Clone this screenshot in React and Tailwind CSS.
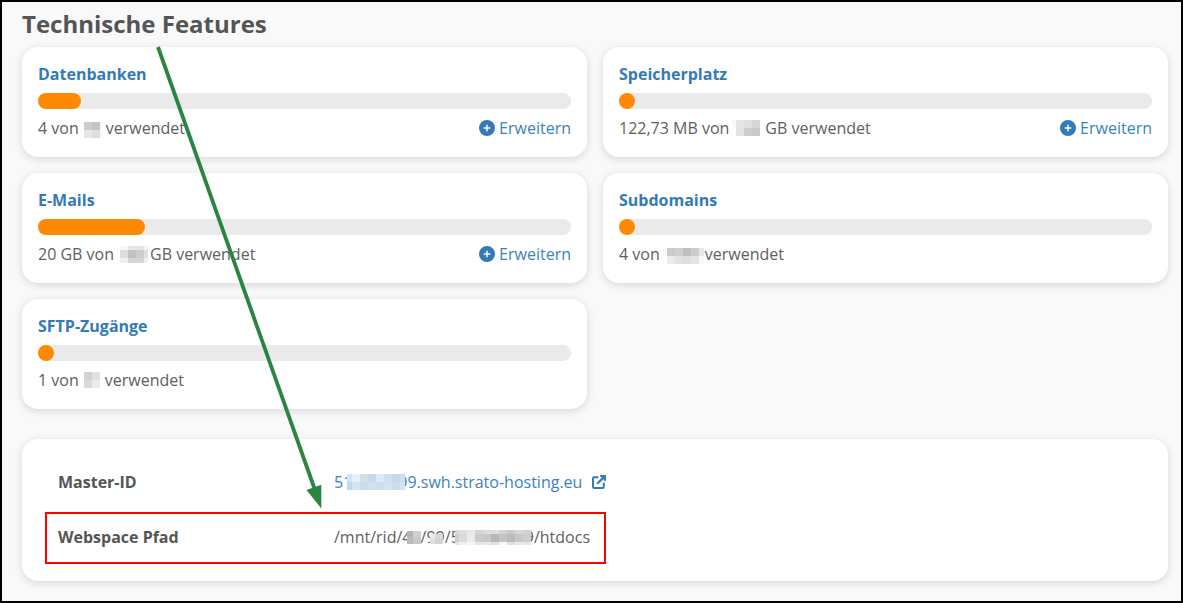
// Desc: Technical features overview of the hosting package
import { FaCirclePlus } from "react-icons/fa6";

// Pixelated cover over private values. cols/rows hold the cell sizes,
// cells the colors row by row (null = empty cell)
const Mosaic = ({ cols, rows, cells, className }) => {
  const width = cols.reduce((sum, w) => sum + w, 0);
  const height = rows.reduce((sum, h) => sum + h, 0);
  const rects = [];
  let y = 0;
  rows.forEach((h, r) => {
    let x = 0;
    cols.forEach((w, c) => {
      const fill = cells[r][c];
      if (fill) {
        rects.push(
          <rect key={`${r}-${c}`} x={x} y={y} width={w} height={h} fill={fill} />
        );
      }
      x += w;
    });
    y += h;
  });

  return (
    <svg
      width={width}
      height={height}
      viewBox={`0 0 ${width} ${height}`}
      shapeRendering="crispEdges"
      aria-hidden="true"
      className={`relative inline-block shrink-0 ${className || ""}`}
    >
      {rects}
    </svg>
  );
};

const ExternalLinkIcon = ({ className }) => (
  <svg
    viewBox="0 0 14 14"
    fill="none"
    stroke="currentColor"
    strokeWidth="2"
    aria-hidden="true"
    className={className}
  >
    <path
      d="M5.5 2.2H2.2Q1 2.2 1 3.4V11.8Q1 13 2.2 13H10.6Q11.8 13 11.8 11.8V8.5"
      strokeLinecap="round"
    />
    <path d="M8.2 1.1H12.9V5.8M12.6 1.4L5.3 8.7" strokeWidth="2.2" />
  </svg>
);

const features = [
  {
    title: "Datenbanken",
    percent: 8,
    before: "4 von",
    after: "verwendet",
    expandable: true,
    mosaic: {
      cols: [8, 8, 3],
      rows: [8, 8],
      cells: [
        ["#cdcdcd", "#c4c4c4", "#f8f8f8"],
        ["#e6e6e6", "#dedede", "#fafafa"],
      ],
      className: "mt-1 ml-[5px] mr-[3px]",
    },
  },
  {
    title: "Speicherplatz",
    percent: 1,
    before: "122,73 MB von",
    after: "GB verwendet",
    expandable: true,
    mosaic: {
      cols: [4, 8, 8, 8],
      rows: [8, 8],
      cells: [
        ["#f8f8f8", "#e6e6e6", "#e0e0e0", "#d6d6d6"],
        [null, "#e4e4e4", "#cccccc", "#cacaca"],
      ],
      className: "ml-[3px] mr-[5px]",
    },
  },
  {
    title: "E-Mails",
    percent: 20,
    before: "20 GB von",
    after: "GB verwendet",
    expandable: true,
    mosaic: {
      cols: [8, 8, 8, 4],
      rows: [4, 8, 5],
      cells: [
        ["#f7f7f7", "#e6e6e6", "#e6e6e6", "#f2f2f2"],
        ["#dedede", "#c1c1c1", "#cdcdcd", "#e0e0e0"],
        ["#f0f0f0", "#d5d5d5", "#d5d5d5", "#f0f0f0"],
      ],
      className: "ml-[6px] mr-[2px]",
    },
  },
  {
    title: "Subdomains",
    percent: 1,
    before: "4 von",
    after: "verwendet",
    expandable: false,
    mosaic: {
      cols: [4, 8, 8, 8, 8, 5],
      rows: [8, 8],
      cells: [
        ["#f8f8f8", "#cacaca", "#d0d0d0", "#c0c0c0", "#cccccc", "#e8e8e8"],
        [null, "#ececec", "#e2e2e2", "#dedede", "#e4e4e4", "#f8f8f8"],
      ],
      className: "mt-1 ml-[3px] mr-px",
    },
  },
  {
    title: "SFTP-Zugänge",
    percent: 1,
    before: "1 von",
    after: "verwendet",
    expandable: false,
    mosaic: {
      cols: [8, 8],
      rows: [8, 8],
      cells: [
        ["#d2d2d2", "#e0e0e0"],
        ["#dadada", "#ebebeb"],
      ],
      className: "ml-[5px] mr-[5px]",
    },
  },
];

const FeatureCard = ({ feature }) => (
  <section className="rounded-2xl bg-white px-4 pt-4 pb-[18px] shadow-[0_2px_8px_rgba(0,0,0,0.14)]">
    <h2 className="font-bold">
      <a href="#" className="text-[#337ab7]">
        {feature.title}
      </a>
    </h2>
    <div className="my-2 h-4 rounded-full bg-[#eaeaea]">
      <div
        className="h-4 min-w-4 rounded-full bg-[#ff8900]"
        style={{ width: `${feature.percent}%` }}
      />
    </div>
    <div className="flex items-center justify-between">
      <p className="flex items-center text-[#606060]">
        <span>{feature.before}</span>
        <Mosaic {...feature.mosaic} />
        <span>{feature.after}</span>
      </p>
      {feature.expandable && (
        <a href="#" className="flex items-center gap-1 text-[#3d82bd]">
          <FaCirclePlus className="size-4 text-[#337ab7]" />
          Erweitern
        </a>
      )}
    </div>
  </section>
);

const App = () => {
  return (
    <div className="relative min-h-screen border-2 border-black bg-[#f9f9f9] pt-[6px] pr-[13px] pb-5 pl-5 font-['Open_Sans','Noto_Sans',sans-serif] text-base leading-[22px] text-[#555]">
      <h1 className="mb-[7px] text-2xl leading-8 font-bold">
        Technische Features
      </h1>

      <div className="grid grid-cols-2 gap-4">
        {features.map((feature) => (
          <FeatureCard key={feature.title} feature={feature} />
        ))}
      </div>

      {/* Zugangsdaten */}
      <dl className="mt-[30px] flex flex-col items-start gap-[3px] rounded-2xl bg-white px-[23px] pt-[18px] pb-[17px] shadow-[0_2px_8px_rgba(0,0,0,0.14)]">
        <div className="flex border-2 border-transparent px-[11px] pt-3 pb-[14px]">
          <dt className="w-[276px] font-bold">Master-ID</dt>
          <dd>
            <a href="#" className="flex items-center text-[#3d82bd]">
              <span>51</span>
              <Mosaic
                cols={[5, 8, 8, 8, 8, 8, 8, 5]}
                rows={[8, 8]}
                cells={[
                  ["#d3e3f0", "#e6eff7", "#d0e1ee", "#c6daeb", "#dde9f3", "#d0e0ef", "#c3d8ea", "#cddfee"],
                  ["#c3d8ea", "#d3e3f0", "#c9dcec", "#d0e1ee", "#cddfee", "#d3e3f0", "#cbddec", "#d3e3f0"],
                ]}
                className="-ml-[5px] -mr-[7px]"
              />
              <span>99.swh.strato-hosting.eu</span>
              <ExternalLinkIcon className="ml-[10px] size-[14px] text-[#337ab7]" />
            </a>
          </dd>
        </div>
        <div className="flex border-2 border-[#f00] pt-3 pr-[14px] pb-[14px] pl-[11px]">
          <dt className="w-[276px] font-bold">Webspace Pfad</dt>
          <dd className="flex items-center text-[#606060]">
            <span>/mnt/rid/44</span>
            <Mosaic
              cols={[6, 8]}
              rows={[6, 7]}
              cells={[
                ["#b4b4b4", "#d0d0d0"],
                ["#bcbcbc", "#c8c8c8"],
              ]}
              className="-ml-[14px]"
            />
            <span>/99</span>
            <Mosaic
              cols={[5, 8]}
              rows={[5, 5]}
              cells={[
                ["#ececec", "#d8d8d8"],
                ["#dedede", "#d4d4d4"],
              ]}
              className="-ml-[15px] mr-[2px] mt-1"
            />
            <span>/5</span>
            <Mosaic
              cols={[4, 8, 8, 8, 8, 8, 8, 8, 8, 8]}
              rows={[4, 8, 3]}
              cells={[
                ["#d8d8d8", "#dedede", "#e8e8e8", "#d4d4d4", "#dcdcdc", "#dedede", "#d4d4d4", "#cccccc", "#d8d8d8", "#d0d0d0"],
                ["#cecece", "#dadada", "#ebebeb", "#cccccc", "#c8c8c8", "#b8b8b8", "#c4c4c4", "#bcbcbc", "#c8c8c8", "#cecece"],
                ["#e4e4e4", "#f0f0f0", "#f4f4f4", "#e6e6e6", "#e8e8e8", "#e0e0e0", "#fafafa", "#e0e0e0", "#e8e8e8", "#e6e6e6"],
              ]}
              className="-ml-[5px] -mr-[6px]"
            />
            <span>9/htdocs</span>
          </dd>
        </div>
      </dl>

      {/* Pfeil auf den Webspace Pfad */}
      <svg
        width="340"
        height="520"
        viewBox="0 0 340 520"
        aria-hidden="true"
        className="pointer-events-none absolute -top-[2px] -left-[2px]"
      >
        <line x1="158" y1="47" x2="315" y2="490" stroke="#2b8540" strokeWidth="3.8" />
        <polygon points="306.5,490 321.3,484.7 321.3,508.5" fill="#2b8540" />
      </svg>
    </div>
  );
};

export default App;
